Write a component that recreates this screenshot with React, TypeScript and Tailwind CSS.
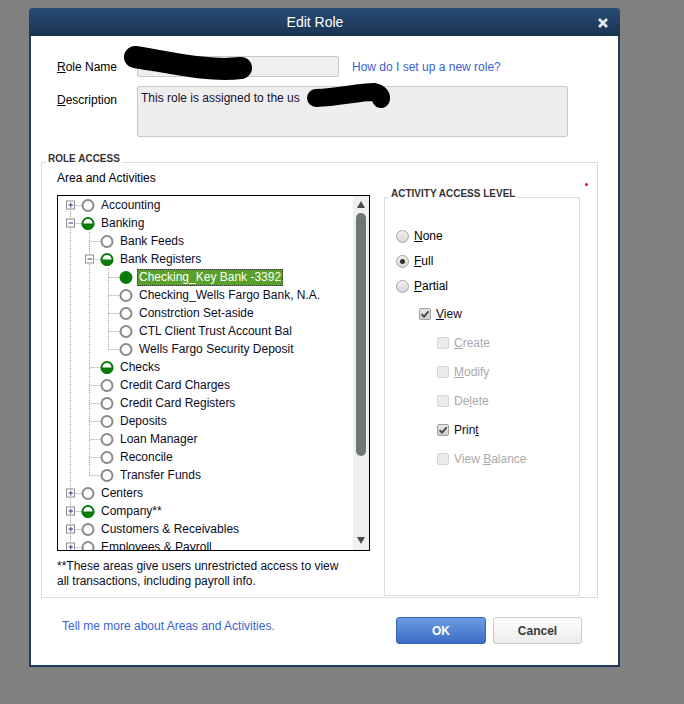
import React from 'react';

type Icon = 'empty' | 'half' | 'full';

interface Row {
  label: string;
  level: number;
  icon: Icon;
  exp?: 'plus' | 'minus';
  next: boolean;
  anc: number[];
  first?: boolean;
  selected?: boolean;
}

const rows: Row[] = [
  { label: 'Accounting', level: 0, icon: 'empty', exp: 'plus', next: true, anc: [], first: true },
  { label: 'Banking', level: 0, icon: 'half', exp: 'minus', next: true, anc: [] },
  { label: 'Bank Feeds', level: 1, icon: 'empty', next: true, anc: [0] },
  { label: 'Bank Registers', level: 1, icon: 'half', exp: 'minus', next: true, anc: [0] },
  { label: 'Checking_Key Bank -3392', level: 2, icon: 'full', next: true, anc: [0, 1], selected: true },
  { label: 'Checking_Wells Fargo Bank, N.A.', level: 2, icon: 'empty', next: true, anc: [0, 1] },
  { label: 'Constrction Set-aside', level: 2, icon: 'empty', next: true, anc: [0, 1] },
  { label: 'CTL Client Trust Account Bal', level: 2, icon: 'empty', next: true, anc: [0, 1] },
  { label: 'Wells Fargo Security Deposit', level: 2, icon: 'empty', next: false, anc: [0, 1] },
  { label: 'Checks', level: 1, icon: 'half', next: true, anc: [0] },
  { label: 'Credit Card Charges', level: 1, icon: 'empty', next: true, anc: [0] },
  { label: 'Credit Card Registers', level: 1, icon: 'empty', next: true, anc: [0] },
  { label: 'Deposits', level: 1, icon: 'empty', next: true, anc: [0] },
  { label: 'Loan Manager', level: 1, icon: 'empty', next: true, anc: [0] },
  { label: 'Reconcile', level: 1, icon: 'empty', next: true, anc: [0] },
  { label: 'Transfer Funds', level: 1, icon: 'empty', next: false, anc: [0] },
  { label: 'Centers', level: 0, icon: 'empty', exp: 'plus', next: true, anc: [] },
  { label: 'Company**', level: 0, icon: 'half', exp: 'plus', next: true, anc: [] },
  { label: 'Customers & Receivables', level: 0, icon: 'empty', exp: 'plus', next: true, anc: [] },
  { label: 'Employees & Payroll', level: 0, icon: 'empty', exp: 'plus', next: true, anc: [] },
];

const GREEN = '#0a7a0a';
const DOT = '#a3a3a3';

const guide = (l: number) => 12.5 + 19 * l;
const iconX = (l: number) => 30 + 19 * l;

const TreeRow: React.FC<{ row: Row }> = ({ row }) => {
  const g = guide(row.level);
  const cx = iconX(row.level);
  const w = 41 + 19 * row.level;
  return (
    <div className="flex h-[18px] items-center">
      <svg width={w} height={18} className="shrink-0">
        {row.anc.map((a) => (
          <line key={a} x1={guide(a)} y1={0} x2={guide(a)} y2={18} stroke={DOT} strokeDasharray="1 1" />
        ))}
        <line x1={g} y1={row.first ? 9 : 0} x2={g} y2={row.next ? 18 : 9} stroke={DOT} strokeDasharray="1 1" />
        <line x1={g} y1={9.5} x2={cx - 6} y2={9.5} stroke={DOT} strokeDasharray="1 1" />
        {row.exp && (
          <g>
            <rect x={g - 4} y={5} width={8} height={8} fill="#fff" stroke="#8e8e8e" />
            <line x1={g - 2} y1={9} x2={g + 2.5} y2={9} stroke="#2b3f7a" />
            {row.exp === 'plus' && <line x1={g + 0.25} y1={6.8} x2={g + 0.25} y2={11.5} stroke="#2b3f7a" />}
          </g>
        )}
        {row.icon === 'empty' && <circle cx={cx} cy={9.5} r={5.5} fill="#fff" stroke="#8a8a8a" strokeWidth={2} />}
        {row.icon === 'half' && (
          <g>
            <circle cx={cx} cy={9.5} r={5.5} fill="#fff" stroke={GREEN} strokeWidth={2} />
            <path d={`M ${cx - 6.5} 9.5 A 6.5 6.5 0 0 0 ${cx + 6.5} 9.5 Z`} fill={GREEN} />
          </g>
        )}
        {row.icon === 'full' && <circle cx={cx} cy={9.5} r={6.5} fill={GREEN} />}
      </svg>
      <span
        className={
          row.selected
            ? 'whitespace-nowrap border border-dotted border-[#333] bg-[#58a02a] px-[1px] leading-[15px] text-white'
            : 'whitespace-nowrap border border-transparent px-[1px] leading-[15px] text-[#0c0c1e]'
        }
      >
        {row.label}
      </span>
    </div>
  );
};

const Radio: React.FC<{ checked?: boolean; children: React.ReactNode }> = ({ checked, children }) => (
  <div className="flex h-[16px] items-center gap-[5px]">
    <span className="flex h-[13px] w-[13px] items-center justify-center rounded-full border border-[#a3a3a3] bg-gradient-to-b from-[#f2f2f2] to-[#d6d6d6]">
      {checked && <span className="h-[5px] w-[5px] rounded-full bg-[#333]" />}
    </span>
    <span className="text-[12px] text-black">{children}</span>
  </div>
);

const Check: React.FC<{ checked?: boolean; disabled?: boolean; children: React.ReactNode }> = ({ checked, disabled, children }) => (
  <div className="flex h-[16px] items-center gap-[5px]">
    <span
      className={
        disabled
          ? 'h-[12px] w-[12px] rounded-[2px] border border-[#d5d5d5] bg-[#ebebeb]'
          : 'flex h-[12px] w-[12px] items-center justify-center rounded-[2px] border border-[#a0a0a0] bg-gradient-to-b from-[#e6e6e6] to-[#cfcfcf]'
      }
    >
      {checked && (
        <svg width="10" height="10" viewBox="0 0 10 10">
          <path d="M1.5 5.2 L4 7.6 L8.6 2.4" fill="none" stroke="#444" strokeWidth="1.8" />
        </svg>
      )}
    </span>
    <span className={disabled ? 'text-[12px] text-[#a9a9a9]' : 'text-[12px] text-[#0c0c1e]'}>{children}</span>
  </div>
);

export default function App() {
  return (
    <div className="h-[704px] w-[684px] overflow-hidden bg-[#808080] pl-[29px] pt-[8px] font-['Liberation_Sans',Arial,sans-serif]">
      <div className="relative flex h-[659px] w-[591px] flex-col rounded-t-[4px] border-2 border-t-0 border-[#1e3a5c] bg-white">
        {/* title bar */}
        <div className="mx-[-2px] flex h-[28px] items-center rounded-t-[4px] bg-gradient-to-b from-[#264d77] to-[#1b3352] px-[10px] pt-[1px]">
          <div className="flex-1 pr-[6px] text-center text-[14px] text-white">Edit Role</div>
          <svg width="12" height="12" viewBox="0 0 12 12" className="mr-[1px]">
            <path d="M2 2 L10 10 M10 2 L2 10" stroke="#e6e9ee" strokeWidth="2.8" />
          </svg>
        </div>

        {/* name + description */}
        <div className="pl-[26px] pt-[20px]">
          <div className="flex h-[21px] items-center">
            <div className="w-[80px] text-[12px] text-black">
              <u>R</u>ole Name
            </div>
            <div className="h-[21px] w-[202px] rounded-[2px] border border-[#c9c9c9] bg-[#efefef]" />
            <div className="ml-[13px] text-[12px] text-[#3b5fd0]">How do I set up a new role?</div>
          </div>
          <div className="mt-[9px] flex">
            <div className="w-[80px] pt-[5px] text-[12px] text-black">
              <u>D</u>escription
            </div>
            <div className="h-[51px] w-[431px] rounded-[2px] border border-[#c9c9c9] bg-[#eeeeee] px-[3px] pt-[2px] text-[12px] text-[#1a0f2e]">
              This role is assigned to the us
            </div>
          </div>
        </div>

        {/* redaction marks */}
        <svg width="591" height="120" className="pointer-events-none absolute left-[-2px] top-[28px]">
          <path d="M 106 21 C 140 26, 178 36, 212 32" fill="none" stroke="#000" strokeWidth="22" strokeLinecap="round" />
          <path d="M 287 62 C 311 61, 329 56, 345 56 Q 353 58, 352 63" fill="none" stroke="#000" strokeWidth="18" strokeLinecap="round" />
        </svg>

        {/* role access */}
        <fieldset className="relative ml-[10px] mt-[16px] h-[445px] w-[557px] border border-[#dcdcdc] px-[15px]">
          <legend className="ml-[-11px] px-[2px] pb-[6px] text-[10px] font-bold leading-[12px] text-[#333]">ROLE ACCESS</legend>
          <span className="absolute right-[9px] top-[12px] h-[3px] w-[3px] rounded-full bg-[#e01010]" />
          <div className="flex gap-[14px]">
            <div className="w-[313px]">
              <div className="text-[12px] leading-[15px] text-black">Area and Activities</div>
              <div className="mt-[9px] flex h-[356px] border border-black">
                <div className="h-full flex-1 overflow-hidden text-[12px]">
                  {rows.map((r) => (
                    <TreeRow key={r.label} row={r} />
                  ))}
                </div>
                <div className="flex w-[16px] flex-col items-center bg-[#f0f0f0]">
                  <svg width="10" height="10" viewBox="0 0 10 10" className="mt-[3px]">
                    <path d="M1 9 L5 2 L9 9 Z" fill="#4a4a4a" />
                  </svg>
                  <div className="mt-[4px] h-[243px] w-[10px] rounded-t-[5px] rounded-b-[5px] bg-[#6f7775]" />
                  <div className="flex-1" />
                  <svg width="10" height="10" viewBox="0 0 10 10" className="mb-[4px]">
                    <path d="M1 1 L5 8 L9 1 Z" fill="#4a4a4a" />
                  </svg>
                </div>
              </div>
              <div className="mt-[8px] text-[12px] leading-[15px] text-[#0c0c1e]">
                **These areas give users unrestricted access to view
                <br />
                all transactions, including payroll info.
              </div>
            </div>

            <fieldset className="mt-[17px] h-[408px] w-[196px] border border-[#dcdcdc] pl-[11px]">
              <legend className="ml-[-7px] px-[2px] pb-[6px] text-[10px] font-bold leading-[12px] text-[#333]">ACTIVITY ACCESS LEVEL</legend>
              <div className="pt-[22px]">
                <Radio>
                  <u>N</u>one
                </Radio>
                <div className="mt-[9px]">
                  <Radio checked>
                    <u>F</u>ull
                  </Radio>
                </div>
                <div className="mt-[9px]">
                  <Radio>
                    <u>P</u>artial
                  </Radio>
                </div>
                <div className="ml-[23px] mt-[12px]">
                  <Check checked>
                    <u>V</u>iew
                  </Check>
                  <div className="ml-[18px]">
                    <div className="mt-[13px]">
                      <Check disabled>
                        <u>C</u>reate
                      </Check>
                    </div>
                    <div className="mt-[13px]">
                      <Check disabled>
                        <u>M</u>odify
                      </Check>
                    </div>
                    <div className="mt-[13px]">
                      <Check disabled>
                        De<u>l</u>ete
                      </Check>
                    </div>
                    <div className="mt-[13px]">
                      <Check checked>
                        Prin<u>t</u>
                      </Check>
                    </div>
                    <div className="mt-[13px]">
                      <Check disabled>
                        View <u>B</u>alance
                      </Check>
                    </div>
                  </div>
                </div>
              </div>
            </fieldset>
          </div>
        </fieldset>

        {/* footer */}
        <div className="flex items-start pl-[31px] pr-[36px] pt-[19px]">
          <div className="flex-1 text-[12px] text-[#3b5fd0]">Tell me more about Areas and Activities.</div>
          <button className="h-[27px] w-[90px] rounded-[3px] border border-[#3a62b2] bg-gradient-to-b from-[#6c9de2] to-[#3d6bc6] text-[12px] font-bold text-white">
            OK
          </button>
          <button className="ml-[7px] h-[27px] w-[89px] rounded-[3px] border border-[#cacaca] bg-gradient-to-b from-white to-[#ebebeb] text-[12px] font-bold text-[#3a3a3a]">
            Cancel
          </button>
        </div>
      </div>
    </div>
  );
}
